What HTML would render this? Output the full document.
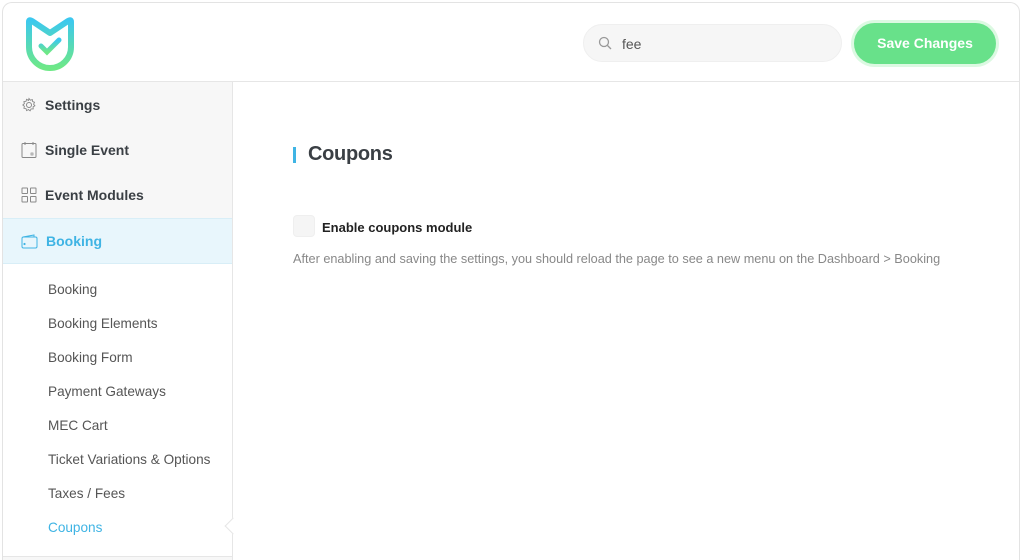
<!DOCTYPE html>
<html style="height:560px;overflow:hidden"><head><meta charset="utf-8"><style>
*{box-sizing:border-box;margin:0;padding:0}
html,body{width:1024px;height:560px;overflow:hidden}
body{background:#fff;font-family:"Liberation Sans",Arial,sans-serif;position:relative}
.frame{position:absolute;left:2px;top:2px;width:1018px;height:558px;border:1px solid #e3e3e3;border-bottom:none;border-radius:10px 10px 0 0;background:#fff;overflow:hidden}
.header{position:absolute;left:0;top:0;width:100%;height:79px;border-bottom:1px solid #e6e6e6}
.search{position:absolute;left:580px;top:21px;width:259px;height:38px;border-radius:19px;background:#f6f6f6;border:1px solid #efefef}
.search span{position:absolute;left:38px;top:11px;font-size:14px;color:#555}
.btn{position:absolute;left:851px;top:20px;width:142px;height:41px;border-radius:21px;background:#68e18a;box-shadow:0 0 0 3px #dcf9e2;color:#fff;font-weight:bold;font-size:14px;text-align:center;line-height:41px}
.side{position:absolute;left:0;top:79px;width:230px;height:478px;background:#fff;border-right:1px solid #e6e6e6;overflow:hidden}
.top{background:#f7f7f7;height:136px}
.it{height:45px;display:flex;align-items:center;padding-left:18px;font-size:14px;font-weight:bold;color:#3a3f44}
.it svg{margin-right:8px}
.act{height:46px;background:#e8f6fc;border-top:1px solid #d8eef7;border-bottom:1px solid #d8eef7;color:#3fb4e4;display:flex;align-items:center;padding-left:18px;font-size:14px;font-weight:bold}
.act svg{margin-right:8px}
.sub{padding-top:9px}
.sub div{height:34px;line-height:34px;padding-left:45px;font-size:13.6px;color:#555}
.sub .on{color:#3fb4e4}
.bot{position:absolute;left:0;top:474px;width:230px;height:4px;border-top:1px solid #e6e6e6;background:#f7f7f7}
.notch{position:absolute;left:224px;top:517px;width:12px;height:12px;background:#fff;border-left:1px solid #e6e6e6;border-bottom:1px solid #e6e6e6;transform:rotate(45deg)}
h2{position:absolute;left:305px;top:140px;font-size:20px;font-weight:bold;color:#3a3f44;letter-spacing:-.3px}
.bar{position:absolute;left:290px;top:144px;width:3px;height:16px;background:#3fb4e4}
.cb{position:absolute;left:290px;top:212px;width:22px;height:22px;border-radius:4px;background:#f5f5f5;border:1px solid #efefef}
.lbl{position:absolute;left:319px;top:217px;font-size:13px;font-weight:bold;color:#222}
.desc{position:absolute;left:290px;top:249px;font-size:12.7px;color:#888}
</style></head><body>
<div class="frame">
<div class="header">
<svg style="position:absolute;left:21px;top:14px" width="52" height="54" viewBox="0 0 52 54"><defs><linearGradient id="g" x1="0" y1="0" x2="0" y2="1"><stop offset="0" stop-color="#3cc8ef"/><stop offset="1" stop-color="#6ee887"/></linearGradient></defs><path d="M5 5 Q5 2 8 4 L26 16 L44 4 Q47 2 47 5 V30 A21 21 0 0 1 5 30 Z" fill="none" stroke="url(#g)" stroke-width="6" stroke-linejoin="round"/><path d="M17 29 L23 35 L35 23" fill="none" stroke="url(#g)" stroke-width="5" stroke-linecap="round"/></svg>
<div class="search"><svg style="position:absolute;left:14px;top:11px" width="14" height="14" viewBox="0 0 14 14"><circle cx="6" cy="6" r="4.5" fill="none" stroke="#999" stroke-width="1.3"/><path d="M9.5 9.5 L13 13" stroke="#999" stroke-width="1.3"/></svg><span>fee</span></div>
<div class="btn">Save Changes</div>
</div>
<div class="side">
<div class="top">
<div class="it"><svg width="16" height="16" viewBox="0 0 16 16"><circle cx="8" cy="8" r="2.5" fill="none" stroke="#888"/><path d="M8 1.5 L9.3 3.2 L11.3 2.6 L11.6 4.6 L13.5 5.3 L12.6 7.2 L13.9 8.8 L12.1 9.8 L12.2 11.9 L10.1 11.9 L9.1 13.8 L7.5 12.5 L5.6 13.6 L5 11.6 L2.9 11.3 L3.4 9.3 L1.8 8 L3.4 6.6 L2.9 4.6 L5 4.3 L5.6 2.3 L7.5 3.4 Z" fill="none" stroke="#888" stroke-width=".9"/></svg>Settings</div>
<div class="it"><svg width="16" height="18" viewBox="0 0 16 18"><rect x="1" y="2.5" width="14" height="14" rx="1" fill="none" stroke="#888"/><path d="M4 1v3M12 1v3" stroke="#888"/><rect x="10" y="12" width="2" height="2" fill="none" stroke="#888" stroke-width=".7"/></svg>Single Event</div>
<div class="it"><svg width="16" height="16" viewBox="0 0 16 16" fill="none" stroke="#888"><rect x="1" y="1" width="5.5" height="5.5" rx=".5"/><rect x="9.5" y="1" width="5.5" height="5.5" rx=".5"/><rect x="1" y="9.5" width="5.5" height="5.5" rx=".5"/><rect x="9.5" y="9.5" width="5.5" height="5.5" rx=".5"/></svg>Event Modules</div>
</div>
<div class="act"><svg width="17" height="15" viewBox="0 0 17 15" fill="none" stroke="#3fb4e4"><rect x="1" y="3" width="15" height="11" rx="1.5"/><path d="M2 3 L13 1 L13 3"/><circle cx="3.5" cy="10" r=".6" fill="#3fb4e4"/></svg>Booking</div>
<div class="sub">
<div>Booking</div><div>Booking Elements</div><div>Booking Form</div><div>Payment Gateways</div><div>MEC Cart</div><div>Ticket Variations &amp; Options</div><div>Taxes / Fees</div><div class="on">Coupons</div>
</div>
<div class="bot"></div>
</div>
<div class="notch"></div>
<div class="bar"></div>
<h2>Coupons</h2>
<div class="cb"></div>
<div class="lbl">Enable coupons module</div>
<div class="desc">After enabling and saving the settings, you should reload the page to see a new menu on the Dashboard &gt; Booking</div>
</div>
</body></html>
